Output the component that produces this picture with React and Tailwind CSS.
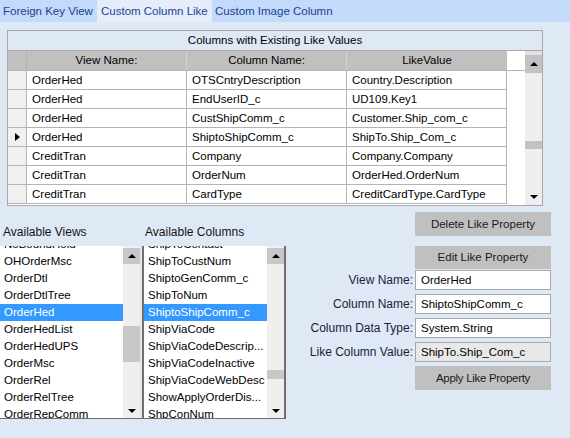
import React from "react";

const gridRows = [
  ["OrderHed", "OTSCntryDescription", "Country.Description"],
  ["OrderHed", "EndUserID_c", "UD109.Key1"],
  ["OrderHed", "CustShipComm_c", "Customer.Ship_com_c"],
  ["OrderHed", "ShiptoShipComm_c", "ShipTo.Ship_Com_c", true],
  ["CreditTran", "Company", "Company.Company"],
  ["CreditTran", "OrderNum", "OrderHed.OrderNum"],
  ["CreditTran", "CardType", "CreditCardType.CardType"],
];

const views = [
  "NoBoundHold",
  "OHOrderMsc",
  "OrderDtl",
  "OrderDtlTree",
  "OrderHed",
  "OrderHedList",
  "OrderHedUPS",
  "OrderMsc",
  "OrderRel",
  "OrderRelTree",
  "OrderRepComm",
];

const columns = [
  "ShipToContact",
  "ShipToCustNum",
  "ShiptoGenComm_c",
  "ShipToNum",
  "ShiptoShipComm_c",
  "ShipViaCode",
  "ShipViaCodeDescrip...",
  "ShipViaCodeInactive",
  "ShipViaCodeWebDesc",
  "ShowApplyOrderDis...",
  "ShpConNum",
];

const UpArrow = () => (
  <div className="w-0 h-0 border-x-[4px] border-x-transparent border-b-[4px] border-b-black" />
);
const DownArrow = () => (
  <div className="w-0 h-0 border-x-[4px] border-x-transparent border-t-[4px] border-t-black" />
);

const ListBox = ({ items, selected, scroll }) => (
  <div className="flex h-full">
    <div className="w-[123px] h-full bg-white overflow-hidden">
      <div className="-mt-[10px]">
        {items.map((it) => (
          <div
            key={it}
            className={`h-[17px] leading-[17px] pl-[4px] whitespace-nowrap overflow-hidden ${
              it === selected ? "bg-[#3399ff] text-white" : "text-black"
            }`}
          >
            {it}
          </div>
        ))}
      </div>
    </div>
    {scroll}
  </div>
);

const Field = ({ label, value, readOnly }) => (
  <div className="flex items-center gap-[2px] mt-[4px] first:mt-[1px]">
    <span className="text-[12px] text-[#1c1c3c]">{label}</span>
    <div
      className={`w-[136px] h-[20px] border border-[#a8a8a8] pl-[5px] leading-[18px] text-black ${
        readOnly ? "bg-[#e8e8e8]" : "bg-white"
      }`}
    >
      {value}
    </div>
  </div>
);

export default function App() {
  return (
    <div className="w-[570px] h-[438px] bg-[#dfe8f5] overflow-hidden font-['Liberation_Sans',Arial,sans-serif] text-[11.5px]">
      {/* tabs */}
      <div className="h-[22px] bg-[#c3dafa] flex items-stretch text-[#1c3f94]">
        <div className="pl-[3px] pr-[4px] w-[97px] leading-[22px]">Foreign Key View</div>
        <div className="w-[115px] pl-[4px] bg-[#e4edf9] leading-[22px]">Custom Column Like</div>
        <div className="pl-[3px] leading-[22px]">Custom Image Column</div>
      </div>

      {/* grid */}
      <div className="mt-[8px] ml-[7px] w-[536px] h-[176px] border border-[#a9a9a9] flex flex-col">
        <div className="h-[20px] border-b border-[#a9a9a9] text-center leading-[19px] text-black">
          Columns with Existing Like Values
        </div>
        <div className="flex h-[154px]">
          <div className="w-[517px] bg-white">
            <div className="flex h-[20px] bg-[#c0c0c0] border-b border-[#b4b4b4] text-black">
              <div className="w-[19px] border-r border-[#b4b4b4]" />
              <div className="w-[160px] border-r border-[#d4d4d4] text-center leading-[19px]">View Name:</div>
              <div className="w-[160px] border-r border-[#d4d4d4] text-center leading-[19px]">Column Name:</div>
              <div className="w-[160px] text-center leading-[19px]">LikeValue</div>
              <div className="flex-1 bg-white" />
            </div>
            {gridRows.map(([v, c, l, cur]) => (
              <div key={c} className="flex h-[19px] text-black">
                <div className="w-[19px] bg-[#f0f0f0] border-r border-b border-[#b4b4b4] flex items-center justify-center">
                  {cur && (
                    <div className="w-0 h-0 border-y-[4px] border-y-transparent border-l-[5px] border-l-black" />
                  )}
                </div>
                <div className="w-[160px] border-r border-b border-[#b4b4b4] pl-[5px] leading-[18px]">{v}</div>
                <div className="w-[160px] border-r border-b border-[#b4b4b4] pl-[5px] leading-[18px]">{c}</div>
                <div className="w-[160px] border-r border-b border-[#b4b4b4] pl-[5px] leading-[18px]">{l}</div>
              </div>
            ))}
          </div>
          <div className="w-[17px] flex flex-col bg-[#eeeeee]">
            <div className="h-[4px] bg-[#e2e2e2]" />
            <div className="h-[18px] bg-[#c2c2c2] flex items-center justify-center">
              <UpArrow />
            </div>
            <div className="h-[68px]" />
            <div className="h-[8px] bg-[#c2c2c2]" />
            <div className="h-[39px]" />
            <div className="h-[17px] flex items-center justify-center">
              <DownArrow />
            </div>
          </div>
        </div>
      </div>

      {/* bottom */}
      <div className="flex">
        <div className="w-[286px]">
          <div className="flex pt-[18px] h-[34px] text-[12px] text-[#141414] leading-[16px]">
            <div className="w-[144px] pl-[3px]">Available Views</div>
            <div className="pl-[1px]">Available Columns</div>
          </div>
          <div className="mt-[6px] h-[173px] flex border-b border-[#6e6e6e]">
            <div className="w-[140px] h-[172px]">
              <ListBox
                items={views}
                selected="OrderHed"
                scroll={
                  <div className="w-[17px] flex flex-col bg-[#efefef]">
                    <div className="h-[2px]" />
                    <div className="h-[16px] bg-[#c8c8c8] flex items-center justify-center">
                      <UpArrow />
                    </div>
                    <div className="h-[62px]" />
                    <div className="h-[36px] bg-[#c8c8c8]" />
                    <div className="h-[41px]" />
                    <div className="h-[15px] flex items-center justify-center">
                      <DownArrow />
                    </div>
                  </div>
                }
              />
            </div>
            <div className="w-[2px]" />
            <div className="h-[172px] border-x-2 border-[#6e6e6e]">
              <ListBox
                items={columns}
                selected="ShiptoShipComm_c"
                scroll={
                  <div className="w-[17px] flex flex-col bg-[#efefef]">
                    <div className="h-[2px]" />
                    <div className="h-[16px] bg-[#c8c8c8] flex items-center justify-center">
                      <UpArrow />
                    </div>
                    <div className="h-[106px]" />
                    <div className="h-[9px] bg-[#c8c8c8]" />
                    <div className="h-[24px]" />
                    <div className="h-[15px] flex items-center justify-center">
                      <DownArrow />
                    </div>
                  </div>
                }
              />
            </div>
          </div>
        </div>

        <div className="flex-1 flex flex-col items-end pr-[19px]">
          <div className="mt-[6px] w-[136px] h-[24px] bg-[#c0c0c0] text-center leading-[24px] text-[#1a1a1a]">
            Delete Like Property
          </div>
          <div className="mt-[10px] w-[136px] h-[23px] bg-[#c0c0c0] text-center leading-[23px] text-[#1a1a1a]">
            Edit Like Property
          </div>
          <div className="flex flex-col items-end">
            <Field label="View Name:" value="OrderHed" />
            <Field label="Column Name:" value="ShiptoShipComm_c" />
            <Field label="Column Data Type:" value="System.String" />
            <Field label="Like Column Value:" value="ShipTo.Ship_Com_c" readOnly />
          </div>
          <div className="mt-[4px] w-[136px] h-[24px] bg-[#c0c0c0] text-center leading-[24px] text-[#1a1a1a] tracking-[-0.3px]">
            Apply Like Property
          </div>
        </div>
      </div>
    </div>
  );
}
